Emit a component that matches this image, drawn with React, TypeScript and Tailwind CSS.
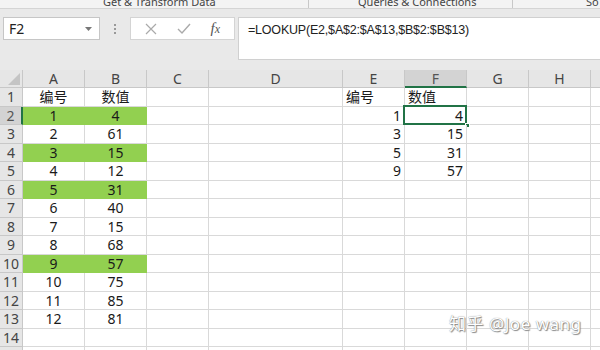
import React from "react"

const cols = [
  { name: "A", w: "w-[62px]" },
  { name: "B", w: "w-[62px]" },
  { name: "C", w: "w-[62px]" },
  { name: "D", w: "w-[134px]" },
  { name: "E", w: "w-[62px]" },
  { name: "F", w: "w-[62px]" },
  { name: "G", w: "w-[62px]" },
  { name: "H", w: "w-[62px]" },
  { name: "I", w: "w-[62px]" },
]

const left: [string, string, boolean][] = [
  ["编号", "数值", false],
  ["1", "4", true],
  ["2", "61", false],
  ["3", "15", true],
  ["4", "12", false],
  ["5", "31", true],
  ["6", "40", false],
  ["7", "15", false],
  ["8", "68", false],
  ["9", "57", true],
  ["10", "75", false],
  ["11", "85", false],
  ["12", "81", false],
]

const right: [string, string][] = [
  ["编号", "数值"],
  ["1", "4"],
  ["3", "15"],
  ["5", "31"],
  ["9", "57"],
]

const font = { fontFamily: '"Noto Sans", "Noto Sans CJK SC", sans-serif' }

function Cell({
  w,
  children,
  className = "",
  line = "border-[#d9d9d9]",
}: {
  w: string
  children?: React.ReactNode
  className?: string
  line?: string
}) {
  return (
    <div className={`${w} shrink-0 h-full flex items-center border-r border-b ${line} px-[3px] text-[14px] text-[#1a1a1a] ${className}`}>
      {children}
    </div>
  )
}

export default function App() {
  const rows = Array.from({ length: 15 }, (_, i) => i + 1)
  return (
    <div className="w-[600px] h-[350px] overflow-hidden bg-[#e9e9e9] relative" style={font}>
      {/* ribbon bottom */}
      <div className="h-[9px] bg-[#f3f3f3] border-b border-[#d4d4d4] relative overflow-hidden text-[11px] leading-[12px] text-[#444]">
        <span className="absolute left-[103px] top-[-4px]">Get &amp; Transform Data</span>
        <span className="absolute left-[308px] top-0 h-full border-l border-[#c8c8c8]" />
        <span className="absolute left-[358px] top-[-4px]">Queries &amp; Connections</span>
        <span className="absolute left-[512px] top-0 h-full border-l border-[#c8c8c8]" />
        <span className="absolute left-[586px] top-[-4px]">So</span>
      </div>

      {/* formula bar */}
      <div className="flex items-start pt-[8px] h-[61px]">
        <div className="ml-[3px] w-[97px] h-[23px] bg-white border border-[#c6c6c6] flex items-center justify-between px-[5px] text-[14px] text-[#222]">
          <span>F2</span>
          <svg width="7" height="4" viewBox="0 0 7 4" className="mr-[2px]">
            <path d="M0 0h7L3.5 4z" fill="#777" />
          </svg>
        </div>
        <div className="w-[30px] h-[23px] flex flex-col items-center justify-center gap-[2px]">
          <span className="w-[2px] h-[2px] bg-[#999]" />
          <span className="w-[2px] h-[2px] bg-[#999]" />
          <span className="w-[2px] h-[2px] bg-[#999]" />
        </div>
        <div className="w-[105px] h-[23px] bg-white border border-[#d4d4d4] flex items-center justify-around px-[4px]">
          <svg width="12" height="12" viewBox="0 0 12 12">
            <path d="M1 1l10 10M11 1L1 11" stroke="#aaa" strokeWidth="1.2" />
          </svg>
          <svg width="14" height="12" viewBox="0 0 14 12">
            <path d="M1 6l4 4 8-9" stroke="#aaa" strokeWidth="1.4" fill="none" />
          </svg>
          <span className="italic text-[15px] text-[#555]" style={{ fontFamily: '"Liberation Serif", serif' }}>
            f<span className="text-[12px]">x</span>
          </span>
        </div>
        <div
          className="ml-[3px] flex-1 h-[43px] bg-white border border-r-0 border-[#d0d0d0] pl-[9px] pt-[3px] text-[12.5px] tracking-[-0.2px] text-[#222]"
          style={{ fontFamily: '"Liberation Sans", sans-serif' }}
        >
          =LOOKUP(E2,$A$2:$A$13,$B$2:$B$13)
        </div>
      </div>

      {/* sheet */}
      <div className="bg-white">
        <div className="flex h-[18px] bg-[#e6e6e6] text-[14px] text-[#444]">
          <div className="w-[23px] shrink-0 h-full border-r border-b border-[#c8c8c8] flex items-end justify-end p-[2px]">
            <svg width="12" height="12" viewBox="0 0 12 12">
              <path d="M12 0v12H0z" fill="#c4c4c4" />
            </svg>
          </div>
          {cols.map((c) =>
            c.name === "F" ? (
              <div
                key={c.name}
                className={`${c.w} shrink-0 h-full flex items-center justify-center bg-[#d3d3d3] border-r border-r-[#c8c8c8] border-b-2 border-b-[#217346] text-[#555]`}
              >
                {c.name}
              </div>
            ) : (
              <div key={c.name} className={`${c.w} shrink-0 h-full flex items-center justify-center border-r border-b border-[#c8c8c8]`}>
                {c.name}
              </div>
            )
          )}
        </div>

        {rows.map((r) => {
          const l = left[r - 1]
          const rr = right[r - 1]
          const green = l?.[2]
          return (
            <div key={r} className="flex h-[18.5px]">
              {r === 2 ? (
                <div className="w-[23px] shrink-0 h-full flex items-center justify-center bg-[#d3d3d3] border-b border-b-[#c8c8c8] border-r-2 border-r-[#217346] text-[14px] text-[#555]">
                  {r}
                </div>
              ) : (
                <div className="w-[23px] shrink-0 h-full flex items-center justify-center bg-[#e6e6e6] border-r border-b border-[#c8c8c8] text-[14px] text-[#444]">
                  {r}
                </div>
              )}
              <Cell w="w-[62px]" line={green ? "border-[#92d050]" : "border-[#d9d9d9]"} className={`justify-center ${green ? "bg-[#92d050]" : ""}`}>
                {l?.[0]}
              </Cell>
              <Cell w="w-[62px]" line={green ? "border-[#92d050]" : "border-[#d9d9d9]"} className={`justify-center ${green ? "bg-[#92d050]" : ""}`}>
                {l?.[1]}
              </Cell>
              <Cell w="w-[62px]" />
              <Cell w="w-[134px]" />
              <Cell w="w-[62px]" className={r === 1 ? "justify-start" : "justify-end"}>
                {rr?.[0]}
              </Cell>
              <Cell w="w-[62px]" className={`${r === 1 ? "justify-start" : "justify-end"} relative`}>
                {rr?.[1]}
                {r === 2 && (
                  <>
                    <span className="absolute left-[-2px] top-[-2px] right-[-1px] bottom-[-1px] border-2 border-[#217346]" />
                    <span className="absolute right-[-4px] bottom-[-4px] w-[5px] h-[5px] bg-[#217346] border border-white" />
                  </>
                )}
              </Cell>
              <Cell w="w-[62px]" />
              <Cell w="w-[62px]" />
              <Cell w="w-[62px]" />
            </div>
          )
        })}
      </div>

      {/* watermark */}
      <div
        className="absolute left-[449px] top-[311px] text-[17px] text-white tracking-[0.5px]"
        style={{ textShadow: "0 0 1px #777, 1px 1px 1px #888" }}
      >
        知乎 @Joe wang
      </div>
    </div>
  )
}
